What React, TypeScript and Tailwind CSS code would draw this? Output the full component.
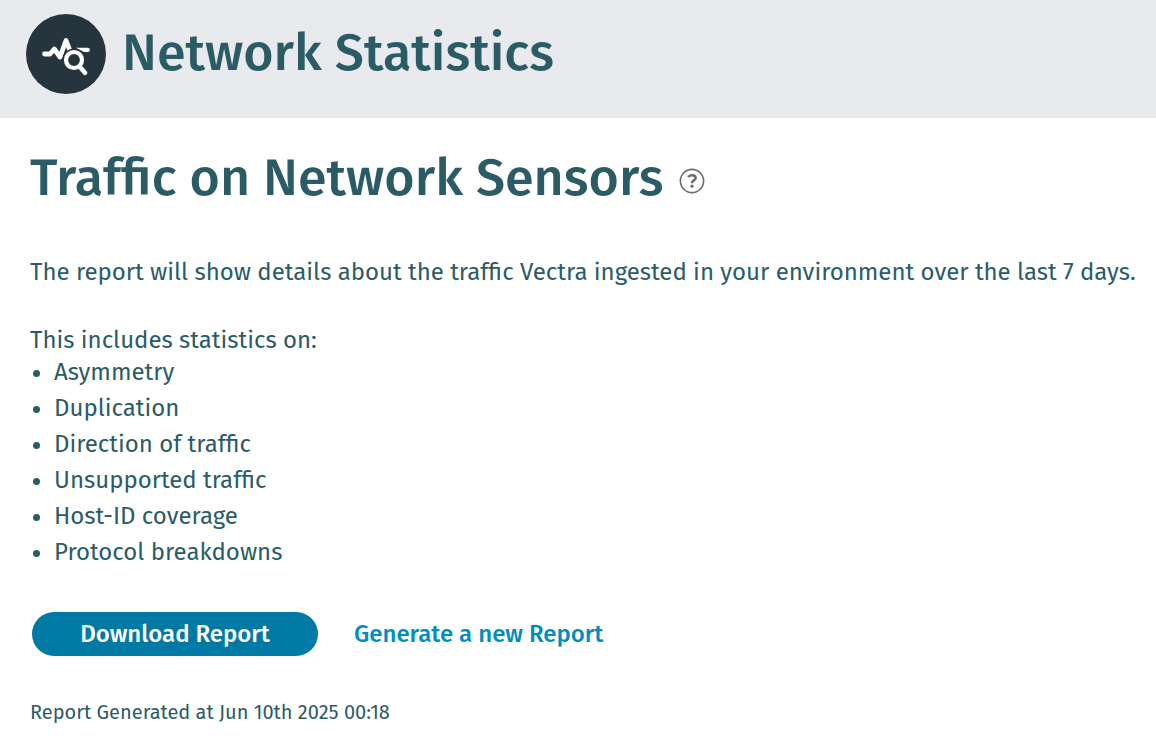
const TOPICS = [
    'Asymmetry',
    'Duplication',
    'Direction of traffic',
    'Unsupported traffic',
    'Host-ID coverage',
    'Protocol breakdowns'
]

function StatsLogo() {
    return (
        <svg viewBox="0 0 80 80" className="size-20 shrink-0" fill="none" aria-hidden="true">
            <circle cx="40" cy="40" r="40" fill="#26343d" />
            <path
                d="M18.5 40H24L28.3 35L34 43L40 26.5L44.5 38"
                stroke="#fff"
                strokeWidth="4.8"
                strokeLinecap="round"
                strokeLinejoin="round"
            />
            <path d="M50 33.8H61.8A2.1 2.1 0 0 1 61.8 38H58Z" fill="#fff" />
            <circle cx="48" cy="46" r="11.4" fill="#26343d" />
            <circle cx="48" cy="46" r="8" stroke="#fff" strokeWidth="4.2" />
            <path d="M53.5 52.5L59 58.8" stroke="#fff" strokeWidth="4.6" strokeLinecap="round" />
        </svg>
    )
}

function HelpIcon() {
    return (
        <svg viewBox="0 0 26 26" className="size-[26px]" fill="none" stroke="#6c6d71" aria-hidden="true">
            <circle cx="13" cy="13" r="11.6" strokeWidth="1.6" />
            <path d="M9.3 9.2C10.8 6.4 16.6 6.5 16.6 10C16.6 12.6 13 12.3 13 15.2" strokeWidth="2.6" />
            <circle cx="13" cy="18.2" r="1.6" fill="#6c6d71" stroke="none" />
        </svg>
    )
}

export default function App() {
    return (
        <div className="min-h-screen bg-white font-['Fira_Sans','Noto_Sans',sans-serif] text-[24px] leading-9 text-[#2b5c66]">
            <header className="flex items-start gap-4 bg-[#e9eaee] px-[26px] pt-[14px] pb-6">
                <StatsLogo />
                <h1 className="text-[52px] leading-[78px] font-medium">Network Statistics</h1>
            </header>

            <main className="pt-6 pr-3 pb-3 pl-[30px]">
                <div className="flex items-center gap-4">
                    <h2 className="text-[52px] leading-[72px] font-medium">Traffic on Network Sensors</h2>
                    <button type="button" aria-label="Help" className="mt-[6px]">
                        <HelpIcon />
                    </button>
                </div>

                <p className="mt-10">
                    The report will show details about the traffic Vectra ingested in your environment over the last 7 days.
                </p>

                <p className="mt-8">This includes statistics on:</p>
                <ul className="-mt-1">
                    {TOPICS.map(topic => (
                        <li key={topic} className="flex items-center gap-[14px] pl-[3px]">
                            <span className="mt-[3px] size-[7px] rounded-full bg-[#2b5c66]" />
                            {topic}
                        </li>
                    ))}
                </ul>

                <div className="mt-[42px] flex items-center gap-9 pl-[2px] font-medium">
                    <button type="button" className="h-11 w-[286px] rounded-full bg-[#007aa5] text-white">
                        Download Report
                    </button>
                    <button type="button" className="h-11 text-[#008dbf]">
                        Generate a new Report
                    </button>
                </div>

                <p className="mt-[38px] text-[20px]">Report Generated at Jun 10th 2025 00:18</p>
            </main>
        </div>
    )
}
